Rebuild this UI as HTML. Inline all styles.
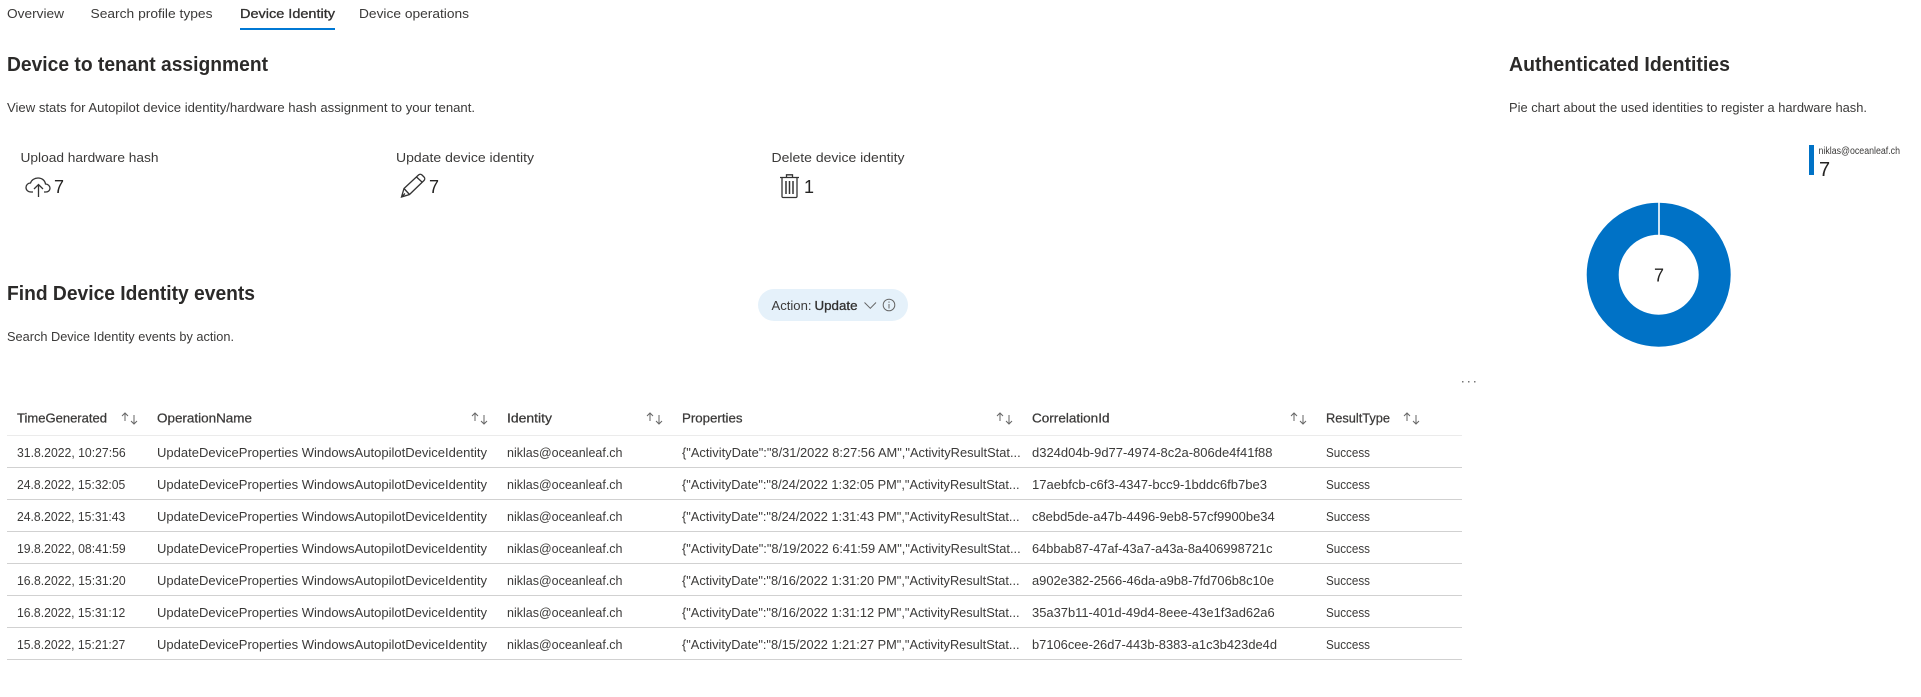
<!DOCTYPE html>
<html lang="en">
<head>
<meta charset="utf-8">
<title>Device Identity</title>
<style>
html,body{margin:0;padding:0;background:#fff;width:1921px;height:697px;overflow:hidden}
svg{display:block}
text{font-family:"Liberation Sans",sans-serif;fill:#3b3a39;font-size:12.5px}
.h{font-size:20px;font-weight:700;fill:#2b2a29}
.b{font-size:12.5px}
.v{font-size:18px;fill:#252423}
.m{stroke:#323130;stroke-width:.3;fill:#323130}
.t{font-size:12.5px;stroke:#3b3a39;stroke-width:.25}
.l{stroke:#d1d1d1;stroke-width:1}
.s{fill:none;stroke:#666;stroke-width:1}
.i{fill:none;stroke:#333;stroke-width:1.3}
</style>
</head>
<body>
<svg width="1921" height="697" viewBox="0 0 1921 697" xmlns="http://www.w3.org/2000/svg">
<defs>
<g id="sort">
<path class="s" d="M4 1V9M1 4L4 1L7 4"/>
<path class="s" d="M13 3V12M10 9L13 12L16 9"/>
</g>
</defs>

<!-- tabs -->
<text x="7" y="18" textLength="57" lengthAdjust="spacingAndGlyphs">Overview</text>
<text x="90.5" y="18" textLength="122" lengthAdjust="spacingAndGlyphs">Search profile types</text>
<text class="m" x="240" y="18" textLength="95" lengthAdjust="spacingAndGlyphs">Device Identity</text>
<text x="359" y="18" textLength="110" lengthAdjust="spacingAndGlyphs">Device operations</text>
<rect x="240" y="28" width="95" height="2" fill="#0078d4"/>

<!-- left head -->
<text class="h" x="7" y="71" textLength="261" lengthAdjust="spacingAndGlyphs">Device to tenant assignment</text>
<text class="b" x="7" y="112" textLength="468" lengthAdjust="spacingAndGlyphs">View stats for Autopilot device identity/hardware hash assignment to your tenant.</text>

<!-- stats -->
<text x="20.5" y="162" textLength="138" lengthAdjust="spacingAndGlyphs">Upload hardware hash</text>
<text x="396" y="162" textLength="138" lengthAdjust="spacingAndGlyphs">Update device identity</text>
<text x="771.5" y="162" textLength="133" lengthAdjust="spacingAndGlyphs">Delete device identity</text>

<path class="i" d="M33 192H31C28 192 26 190 26 187.500C26 185 28 183 30.500 183C31.500 180 34.500 178 38 178C42 178 45 180.500 45.500 184C48 184 50 186 50 188.300C50 190.500 48 192 46 192H44"/>
<path class="i" d="M38.500 197V185M34 189L38.500 184.500L43 189"/>
<text class="v" x="54" y="193">7</text>

<path class="i" d="M401.500 197L404 188.500L418.500 175C419.500 174 421 174 422 175L424 177C425 178 425 179.500 424 180.500L409.500 194.500ZM404 188.500L409.500 194.500M401.500 197L405 193.500M416.500 177L422.500 182.500"/>
<text class="v" x="429" y="193">7</text>

<path class="i" d="M780 177.500H799M782 178V196.500C782 197 782.500 197.500 783 197.500H796C796.500 197.500 797 197 797 196.500V178M786.500 177V174.800H792.500V177"/>
<path d="M786 181V194M789.500 181V194M793 181V194" fill="none" stroke="#333" stroke-width="1.500"/>
<text class="v" x="804" y="193">1</text>

<!-- find events -->
<text class="h" x="7" y="300" textLength="248" lengthAdjust="spacingAndGlyphs">Find Device Identity events</text>
<text class="b" x="7" y="341" textLength="227" lengthAdjust="spacingAndGlyphs">Search Device Identity events by action.</text>

<!-- pill -->
<rect x="758" y="289" width="150" height="32" rx="16" fill="#e5f1fa"/>
<text x="771.500" y="310" textLength="40" lengthAdjust="spacingAndGlyphs">Action:</text>
<text class="m" x="814.500" y="310" textLength="43" lengthAdjust="spacingAndGlyphs">Update</text>
<path class="s" d="M864.500 302.500L870.300 308.300L876 302.500"/>
<circle class="s" cx="889" cy="305" r="5.800"/>
<path class="s" d="M889 304V308.500M889 301.500V302.800"/>

<!-- right column -->
<text class="h" x="1509" y="71" textLength="221" lengthAdjust="spacingAndGlyphs">Authenticated Identities</text>
<text class="b" x="1509" y="112" textLength="358" lengthAdjust="spacingAndGlyphs">Pie chart about the used identities to register a hardware hash.</text>
<rect x="1809" y="145" width="5" height="30" fill="#0072c6"/>
<text x="1818.500" y="154" textLength="81.500" lengthAdjust="spacingAndGlyphs" style="font-size:10px">niklas@oceanleaf.ch</text>
<text x="1819" y="176" style="font-size:20px;fill:#252423">7</text>
<circle cx="1658.700" cy="274.700" r="56" fill="none" stroke="#0072c6" stroke-width="32"/>
<rect x="1658.200" y="202" width="1.600" height="33" fill="#fff"/>
<text x="1654" y="281.500" style="font-size:18px;fill:#252423">7</text>

<!-- more -->
<g fill="#777"><rect x="1462" y="381" width="1.500" height="1.500"/><rect x="1468" y="381" width="1.500" height="1.500"/><rect x="1474" y="381" width="1.500" height="1.500"/></g>

<!-- table header -->
<text class="t" x="17" y="422.500" textLength="90" lengthAdjust="spacingAndGlyphs">TimeGenerated</text>
<use href="#sort" x="121" y="412"/>
<text class="t" x="157" y="422.500" textLength="95" lengthAdjust="spacingAndGlyphs">OperationName</text>
<use href="#sort" x="471" y="412"/>
<text class="t" x="507" y="422.500" textLength="45" lengthAdjust="spacingAndGlyphs">Identity</text>
<use href="#sort" x="646" y="412"/>
<text class="t" x="682" y="422.500" textLength="60.500" lengthAdjust="spacingAndGlyphs">Properties</text>
<use href="#sort" x="996" y="412"/>
<text class="t" x="1032" y="422.500" textLength="77.500" lengthAdjust="spacingAndGlyphs">CorrelationId</text>
<use href="#sort" x="1290" y="412"/>
<text class="t" x="1326" y="422.500" textLength="64" lengthAdjust="spacingAndGlyphs">ResultType</text>
<use href="#sort" x="1403" y="412"/>
<path d="M7 435.500H1462" stroke="#ebebeb" stroke-width="1"/>

<!-- row lines -->
<path class="l" d="M7 467.500H1462M7 499.500H1462M7 531.500H1462M7 563.500H1462M7 595.500H1462M7 627.500H1462M7 659.500H1462"/>

<!-- row 1 -->
<text x="17" y="457" textLength="108.700" lengthAdjust="spacingAndGlyphs">31.8.2022, 10:27:56</text>
<text x="157" y="457" textLength="330" lengthAdjust="spacingAndGlyphs">UpdateDeviceProperties WindowsAutopilotDeviceIdentity</text>
<text x="507" y="457" textLength="115.500" lengthAdjust="spacingAndGlyphs">niklas@oceanleaf.ch</text>
<text x="682" y="457" textLength="338.700" lengthAdjust="spacingAndGlyphs">{"ActivityDate":"8/31/2022 8:27:56 AM","ActivityResultStat...</text>
<text x="1032" y="457" textLength="240.500" lengthAdjust="spacingAndGlyphs">d324d04b-9d77-4974-8c2a-806de4f41f88</text>
<text x="1326" y="457" textLength="44" lengthAdjust="spacingAndGlyphs">Success</text>
<!-- row 2 -->
<text x="17" y="489" textLength="108.300" lengthAdjust="spacingAndGlyphs">24.8.2022, 15:32:05</text>
<text x="157" y="489" textLength="330" lengthAdjust="spacingAndGlyphs">UpdateDeviceProperties WindowsAutopilotDeviceIdentity</text>
<text x="507" y="489" textLength="115.500" lengthAdjust="spacingAndGlyphs">niklas@oceanleaf.ch</text>
<text x="682" y="489" textLength="337.600" lengthAdjust="spacingAndGlyphs">{"ActivityDate":"8/24/2022 1:32:05 PM","ActivityResultStat...</text>
<text x="1032" y="489" textLength="235" lengthAdjust="spacingAndGlyphs">17aebfcb-c6f3-4347-bcc9-1bddc6fb7be3</text>
<text x="1326" y="489" textLength="44" lengthAdjust="spacingAndGlyphs">Success</text>
<!-- row 3 -->
<text x="17" y="521" textLength="108.300" lengthAdjust="spacingAndGlyphs">24.8.2022, 15:31:43</text>
<text x="157" y="521" textLength="330" lengthAdjust="spacingAndGlyphs">UpdateDeviceProperties WindowsAutopilotDeviceIdentity</text>
<text x="507" y="521" textLength="115.500" lengthAdjust="spacingAndGlyphs">niklas@oceanleaf.ch</text>
<text x="682" y="521" textLength="337.600" lengthAdjust="spacingAndGlyphs">{"ActivityDate":"8/24/2022 1:31:43 PM","ActivityResultStat...</text>
<text x="1032" y="521" textLength="242.700" lengthAdjust="spacingAndGlyphs">c8ebd5de-a47b-4496-9eb8-57cf9900be34</text>
<text x="1326" y="521" textLength="44" lengthAdjust="spacingAndGlyphs">Success</text>
<!-- row 4 -->
<text x="17" y="553" textLength="108.700" lengthAdjust="spacingAndGlyphs">19.8.2022, 08:41:59</text>
<text x="157" y="553" textLength="330" lengthAdjust="spacingAndGlyphs">UpdateDeviceProperties WindowsAutopilotDeviceIdentity</text>
<text x="507" y="553" textLength="115.500" lengthAdjust="spacingAndGlyphs">niklas@oceanleaf.ch</text>
<text x="682" y="553" textLength="338.700" lengthAdjust="spacingAndGlyphs">{"ActivityDate":"8/19/2022 6:41:59 AM","ActivityResultStat...</text>
<text x="1032" y="553" textLength="240.500" lengthAdjust="spacingAndGlyphs">64bbab87-47af-43a7-a43a-8a406998721c</text>
<text x="1326" y="553" textLength="44" lengthAdjust="spacingAndGlyphs">Success</text>
<!-- row 5 -->
<text x="17" y="585" textLength="108.700" lengthAdjust="spacingAndGlyphs">16.8.2022, 15:31:20</text>
<text x="157" y="585" textLength="330" lengthAdjust="spacingAndGlyphs">UpdateDeviceProperties WindowsAutopilotDeviceIdentity</text>
<text x="507" y="585" textLength="115.500" lengthAdjust="spacingAndGlyphs">niklas@oceanleaf.ch</text>
<text x="682" y="585" textLength="337.600" lengthAdjust="spacingAndGlyphs">{"ActivityDate":"8/16/2022 1:31:20 PM","ActivityResultStat...</text>
<text x="1032" y="585" textLength="242" lengthAdjust="spacingAndGlyphs">a902e382-2566-46da-a9b8-7fd706b8c10e</text>
<text x="1326" y="585" textLength="44" lengthAdjust="spacingAndGlyphs">Success</text>
<!-- row 6 -->
<text x="17" y="617" textLength="108.300" lengthAdjust="spacingAndGlyphs">16.8.2022, 15:31:12</text>
<text x="157" y="617" textLength="330" lengthAdjust="spacingAndGlyphs">UpdateDeviceProperties WindowsAutopilotDeviceIdentity</text>
<text x="507" y="617" textLength="115.500" lengthAdjust="spacingAndGlyphs">niklas@oceanleaf.ch</text>
<text x="682" y="617" textLength="337.600" lengthAdjust="spacingAndGlyphs">{"ActivityDate":"8/16/2022 1:31:12 PM","ActivityResultStat...</text>
<text x="1032" y="617" textLength="242.700" lengthAdjust="spacingAndGlyphs">35a37b11-401d-49d4-8eee-43e1f3ad62a6</text>
<text x="1326" y="617" textLength="44" lengthAdjust="spacingAndGlyphs">Success</text>
<!-- row 7 -->
<text x="17" y="649" textLength="108.300" lengthAdjust="spacingAndGlyphs">15.8.2022, 15:21:27</text>
<text x="157" y="649" textLength="330" lengthAdjust="spacingAndGlyphs">UpdateDeviceProperties WindowsAutopilotDeviceIdentity</text>
<text x="507" y="649" textLength="115.500" lengthAdjust="spacingAndGlyphs">niklas@oceanleaf.ch</text>
<text x="682" y="649" textLength="337.600" lengthAdjust="spacingAndGlyphs">{"ActivityDate":"8/15/2022 1:21:27 PM","ActivityResultStat...</text>
<text x="1032" y="649" textLength="245" lengthAdjust="spacingAndGlyphs">b7106cee-26d7-443b-8383-a1c3b423de4d</text>
<text x="1326" y="649" textLength="44" lengthAdjust="spacingAndGlyphs">Success</text>
</svg>
</body>
</html>
